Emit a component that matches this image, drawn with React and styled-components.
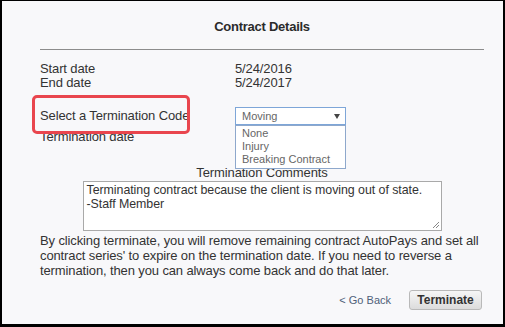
import React from 'react';
import styled, { createGlobalStyle } from 'styled-components';

const GlobalStyle = createGlobalStyle`
    html, body {
        margin: 0;
        padding: 0;
        background: #ffffff;
    }
    * {
        box-sizing: border-box;
    }
`;

const Frame = styled.div`
    position: relative;
    width: 505px;
    height: 327px;
    border-style: solid;
    border-color: #000;
    border-width: 1px 2px 3px 2px;
    background: #f8f8fa;
    padding: 18px 19px 0 38px;
    font-family: 'Liberation Sans', Arial, sans-serif;
    color: #333;
    font-size: 13px;
    letter-spacing: -0.12px;
`;

const Title = styled.div`
    text-align: center;
    font-weight: bold;
    font-size: 13px;
    line-height: 16px;
    letter-spacing: -0.25px;
    color: #2b2b2b;
`;

const Rule = styled.div`
    height: 1px;
    background: #8c8c8c;
    margin-top: 14px;
`;

const Rows = styled.div`
    margin-top: 12px;
`;

const Row = styled.div`
    display: grid;
    grid-template-columns: 195px 1fr;
    align-items: center;
    line-height: 14px;
    min-height: ${(p) => p.height || 14}px;
    margin-top: ${(p) => p.gap || 0}px;
`;

const Label = styled.span`
    color: #333;
`;

const SelectWrap = styled.div`
    position: relative;
    width: 111px;
`;

const SelectBox = styled.div`
    height: 18px;
    border: 1px solid #7ea6d8;
    background: #fff;
    display: flex;
    align-items: center;
    justify-content: space-between;
    padding: 0 5px 0 6px;
    font-size: 11px;
    letter-spacing: 0;
    color: #666;
`;

const Arrow = styled.svg`
    width: 6px;
    height: 5px;
`;

const OptionList = styled.div`
    position: absolute;
    top: 18px;
    left: 0;
    width: 111px;
    background: #fff;
    border: 1px solid #8ea8cc;
    padding: 1px 0 2px 6px;
    font-size: 11px;
    letter-spacing: 0;
    line-height: 13px;
    color: #666;
    z-index: 2;
`;

const Option = styled.div``;

const CommentsLabel = styled.div`
    text-align: center;
    line-height: 14px;
    margin-top: 22px;
`;

const Comments = styled.div`
    position: relative;
    width: 359px;
    height: 50px;
    margin: 1px auto 0;
    background: #fff;
    border: 1px solid #a9a9a9;
    padding: 2px 3px;
    font-size: 12.4px;
    letter-spacing: -0.05px;
    line-height: 13.5px;
    color: #333;
    white-space: nowrap;
`;

const Grip = styled.svg`
    position: absolute;
    right: 1px;
    bottom: 1px;
    width: 8px;
    height: 8px;
`;

const Notice = styled.p`
    margin: 2px 0 0;
    line-height: 15px;
    color: #333;
`;

const Actions = styled.div`
    display: flex;
    justify-content: flex-end;
    align-items: center;
    gap: 18px;
    margin-top: 12px;
    padding-right: 2px;
`;

const BackLink = styled.a`
    font-size: 11px;
    letter-spacing: 0;
    color: #4f6079;
    text-decoration: none;
`;

const Button = styled.button`
    height: 20px;
    width: 73px;
    padding: 0;
    border: 1px solid #b9b9b9;
    border-radius: 3px;
    background: linear-gradient(#f6f6f6, #dcdcdc);
    font-family: 'Liberation Sans', Arial, sans-serif;
    font-weight: bold;
    font-size: 12px;
    color: #333;
`;

const Highlight = styled.div`
    position: absolute;
    left: 30px;
    top: 94px;
    width: 158px;
    height: 39px;
    border: 3px solid #e9464e;
    border-radius: 5px;
    pointer-events: none;
`;

export default function App() {
    return (
        <>
            <GlobalStyle />
            <Frame>
                <Title>Contract Details</Title>
                <Rule />
                <Rows>
                    <Row>
                        <Label>Start date</Label>
                        <span>5/24/2016</span>
                    </Row>
                    <Row>
                        <Label>End date</Label>
                        <span>5/24/2017</span>
                    </Row>
                    <Row height={18} gap={17}>
                        <Label>Select a Termination Code</Label>
                        <SelectWrap>
                            <SelectBox>
                                <span>Moving</span>
                                <Arrow viewBox="0 0 6 5">
                                    <path d="M0 0 L6 0 L3 5 Z" fill="#444" />
                                </Arrow>
                            </SelectBox>
                            <OptionList>
                                <Option>None</Option>
                                <Option>Injury</Option>
                                <Option>Breaking Contract</Option>
                            </OptionList>
                        </SelectWrap>
                    </Row>
                    <Row gap={5}>
                        <Label>Termination date</Label>
                        <span />
                    </Row>
                </Rows>
                <CommentsLabel>Termination Comments</CommentsLabel>
                <Comments>
                    Terminating contract because the client is moving out of state.
                    <br />
                    -Staff Member
                    <Grip viewBox="0 0 8 8">
                        <path d="M7 1 L1 7 M7 4 L4 7" stroke="#888" strokeWidth="1" />
                    </Grip>
                </Comments>
                <Notice>
                    By clicking terminate, you will remove remaining contract AutoPays and set all contract series' to
                    expire on the termination date. If you need to reverse a termination, then you can always come back
                    and do that later.
                </Notice>
                <Actions>
                    <BackLink href="#">&lt; Go Back</BackLink>
                    <Button>Terminate</Button>
                </Actions>
                <Highlight />
            </Frame>
        </>
    );
}
